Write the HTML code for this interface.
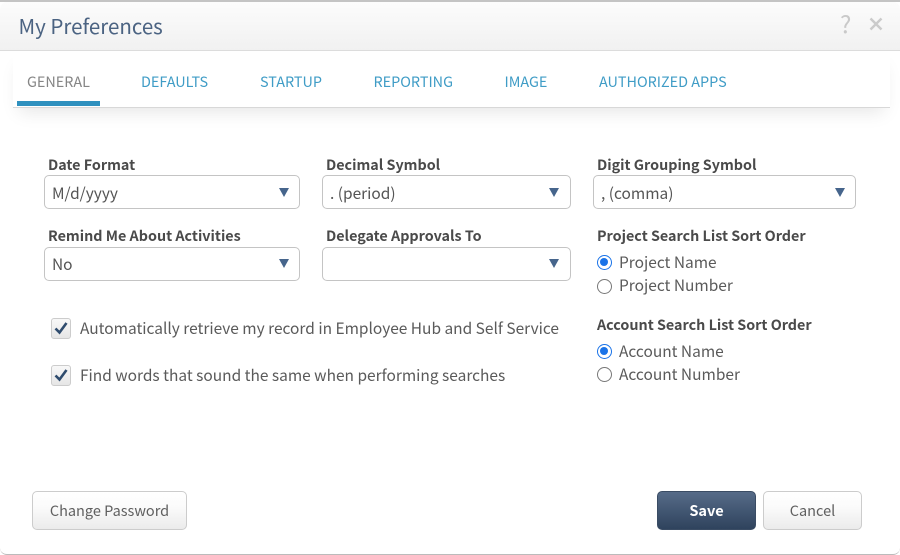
<!DOCTYPE html>
<html lang="en">
<head>
<meta charset="utf-8">
<title>My Preferences</title>
<style>
html,body{margin:0;padding:0;background:#fff}
body{width:900px;height:555px;position:relative;overflow:hidden;font-family:"Noto Sans CJK JP","Liberation Sans",sans-serif;color:#555}
.a{position:absolute;white-space:nowrap;line-height:20px}
#top{left:0;top:0;width:900px;height:2px;background:#c4c4c4}
#dlg{left:0;top:2px;width:900px;height:552px;background:#fff;border-radius:7px 7px 7px 7px;border-bottom:1px solid #bbb}
#head{left:0;top:2px;width:900px;height:48px;border-radius:7px 7px 0 0;background:linear-gradient(#fcfcfc,#f1f1f1);border-bottom:1px solid #dcdcdc}
#title{left:18.5px;top:12px;font-size:20.5px;line-height:26px;color:#4b6382}
#tabs{left:13px;top:51px;width:877px;height:56px;background:#fff;border-bottom:1px solid #d8d8d8;box-shadow:0 10px 18px -6px rgba(0,0,0,.10)}
.tab{top:72px;font-size:14.4px;color:#3f9cc6}
#ul{left:17px;top:101px;width:83px;height:5px;background:#2f91bf}
.lb{font-size:14.33px;font-weight:700;color:#4a4a4a}
.sel{box-sizing:border-box;height:34px;border:1px solid #c4c4c4;border-radius:5px;background:#fff;font-size:15.47px;line-height:32px;padding-left:7px;color:#555}
.arr{width:0;height:0;border-left:5.5px solid transparent;border-right:5.5px solid transparent;border-top:9px solid #46658c}
.t{font-size:15.47px;color:#5a5a5a}
.r{box-sizing:border-box;width:15px;height:15px;border-radius:50%;border:1px solid #777;background:#fff}
.r.on{border:1.5px solid #1a73e8}
.r.on:after{content:"";position:absolute;left:2px;top:2px;width:8px;height:8px;border-radius:50%;background:#1a73e8}
.cb{box-sizing:border-box;width:20px;height:21px;border:1px solid #ccc;border-radius:3px;background:linear-gradient(#f8f8f8,#e6e6e6)}
.btn{box-sizing:border-box;height:39px;border:1px solid #ccc;border-radius:5px;background:linear-gradient(#fff,#fbfbfb 40%,#ebebeb);font-size:14.5px;line-height:37px;text-align:center;color:#5f5f5f}
#save{background:linear-gradient(#566b88,#2f435d);border-color:#3a4c64;color:#fff;font-weight:700}
</style>
</head>
<body>
<div class="a" id="top"></div>
<div class="a" id="dlg"></div>
<div class="a" id="head"></div>
<div class="a" id="title">My Preferences</div>
<div class="a" style="left:840px;top:13px;font-size:24px;color:#c9c9c9">?</div>
<svg class="a" style="left:869px;top:17px" width="14" height="14" viewBox="0 0 14 14"><path d="M1.5 1.5L12.5 12.5M12.5 1.5L1.5 12.5" stroke="#cbcbcb" stroke-width="2.4" fill="none"/></svg>

<div class="a" id="tabs"></div>
<div class="a tab" style="left:27px;color:#858585">GENERAL</div>
<div class="a tab" style="left:141px">DEFAULTS</div>
<div class="a tab" style="left:260px">STARTUP</div>
<div class="a tab" style="left:373.5px">REPORTING</div>
<div class="a tab" style="left:504.5px">IMAGE</div>
<div class="a tab" style="left:599px">AUTHORIZED APPS</div>
<div class="a" id="ul"></div>

<div class="a lb" style="left:48px;top:155px">Date Format</div>
<div class="a sel" style="left:44px;top:175px;width:256px;line-height:34px">M/d/yyyy</div>
<div class="a arr" style="left:278.5px;top:188px"></div>
<div class="a lb" style="left:326px;top:155px">Decimal Symbol</div>
<div class="a sel" style="left:322px;top:175px;width:249px;line-height:34px">. (period)</div>
<div class="a arr" style="left:549px;top:188px"></div>
<div class="a lb" style="left:597px;top:155px">Digit Grouping Symbol</div>
<div class="a sel" style="left:593px;top:175px;width:263px;line-height:34px">, (comma)</div>
<div class="a arr" style="left:835px;top:188px"></div>

<div class="a lb" style="left:48px;top:226px">Remind Me About Activities</div>
<div class="a sel" style="left:44px;top:247px;width:256px">No</div>
<div class="a arr" style="left:278.5px;top:259px"></div>
<div class="a lb" style="left:326px;top:226px">Delegate Approvals To</div>
<div class="a sel" style="left:322px;top:247px;width:249px"></div>
<div class="a arr" style="left:549px;top:259px"></div>
<div class="a lb" style="left:597px;top:226px">Project Search List Sort Order</div>
<div class="a r on" style="left:597px;top:255px"></div>
<div class="a t" style="left:619px;top:252px">Project Name</div>
<div class="a r" style="left:597px;top:279px"></div>
<div class="a t" style="left:619px;top:275px">Project Number</div>

<div class="a cb" style="left:51px;top:318px"></div>
<svg class="a" style="left:53px;top:320px" width="16" height="16" viewBox="0 0 16 16"><path d="M2.5 8.5L6.5 12.5L13.5 3" stroke="#2f4c6e" stroke-width="2.6" fill="none"/></svg>
<div class="a t" style="left:80px;top:318px">Automatically retrieve my record in Employee Hub and Self Service</div>
<div class="a cb" style="left:51px;top:365px"></div>
<svg class="a" style="left:53px;top:367px" width="16" height="16" viewBox="0 0 16 16"><path d="M2.5 8.5L6.5 12.5L13.5 3" stroke="#2f4c6e" stroke-width="2.6" fill="none"/></svg>
<div class="a t" style="left:80px;top:365px">Find words that sound the same when performing searches</div>

<div class="a lb" style="left:597px;top:315px">Account Search List Sort Order</div>
<div class="a r on" style="left:597px;top:344px"></div>
<div class="a t" style="left:619px;top:341px">Account Name</div>
<div class="a r" style="left:597px;top:367px"></div>
<div class="a t" style="left:619px;top:364px">Account Number</div>

<div class="a btn" style="left:32px;top:491px;width:155px">Change Password</div>
<div class="a btn" id="save" style="left:657px;top:491px;width:99px">Save</div>
<div class="a btn" style="left:763px;top:491px;width:99px">Cancel</div>
</body>
</html>
